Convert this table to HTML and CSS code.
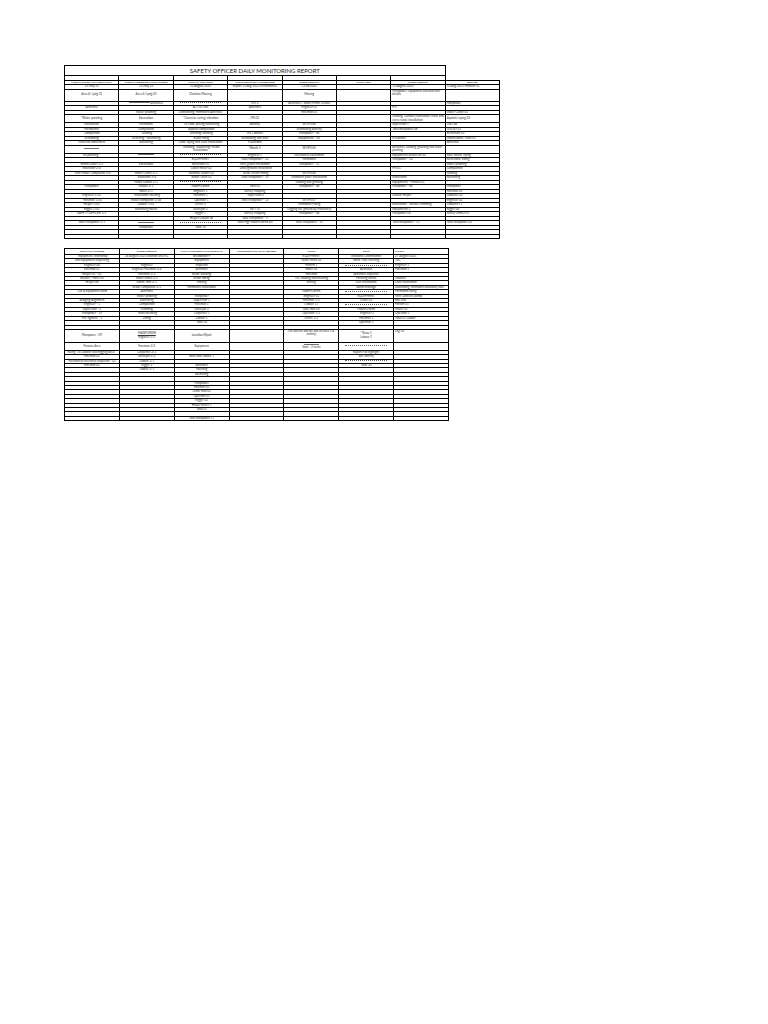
FILE: index.html
```html
<!DOCTYPE html>
<html>
<head>
<meta charset="utf-8">
<title>Safety Officer Daily Monitoring Report</title>
<link rel="stylesheet" href="styles.css">
</head>
<body>
<div class="page">
<table class="sheet t1">
<colgroup><col><col><col><col><col><col><col><col></colgroup>
<tr class="title-row"><td colspan="7" class="title">SAFETY OFFICER DAILY MONITORING REPORT</td><td class="blank"></td></tr>
<tr class="r"><td></td><td></td><td></td><td></td><td></td><td></td><td></td><td class="blank"></td></tr>
<tr class="r hd"><td>PERMIT/WORK AUTHORIZATION</td><td>WORK CARRIED OUT/MONITORED</td><td>ACTIVITY LOCATION</td><td>ACTIVITIES SAFETY SUPERVISED</td><td>WORK PERMITS</td><td>TALKS AREA</td><td>WORK PERMITS</td><td>REMARK</td></tr>
<tr class="r"><td>13 May 23</td><td>13 May 23</td><td>13 August 2023</td><td>Report 13 Aug 2023 Performance</td><td>13.08.2023</td><td></td><td class="l">13 August 2023</td><td class="l">13 Aug 2023 Monitor 01</td></tr>
<tr class="tall12"><td>Area 4/ Lydg 31</td><td>Area 4/ Lydg 03</td><td>IDuction/Moving</td><td></td><td>Moving</td><td></td><td class="l wrap top">Manpower, equipment and activities details</td><td></td></tr>
<tr class="r"><td></td><td><span class="ul"></span> Activities</td><td><span class="dots"></span></td><td>IPS 3</td><td>Activities / Work Permit Details</td><td></td><td></td><td class="l">Manpower</td></tr>
<tr class="r"><td>Activities</td><td></td><td>ACTIVITIES</td><td>Activities</td><td>Engineer 01</td><td></td><td class="l">IPS</td><td></td></tr>
<tr class="r"><td></td><td>Water proofing</td><td>Dismantling, Formwork Activities</td><td></td><td>Foreman 01</td><td></td><td></td><td class="l">Water Cutter 01</td></tr>
<tr class="tall8"><td>"Water proofing</td><td>Excavation</td><td>" Concrete curing/vibration</td><td>IPS 02</td><td></td><td></td><td class="l wrap">Grading, Conduit installation, rebar and curve stone installation</td><td class="l">Asphalt Laying 02</td></tr>
<tr class="r"><td>Excavation</td><td>Formwork</td><td>" Tie cable pulling/backfilling</td><td>Activity</td><td>WI IPS 06</td><td></td><td class="l">Supervisor 1</td><td class="l">Lab Lab</td></tr>
<tr class="r"><td>Formworks</td><td>Compaction</td><td>" Asphalt compaction</td><td></td><td>Scaffolding Activity</td><td></td><td class="l">Total manpower 08</td><td class="l">Leveller 01</td></tr>
<tr class="r"><td>Compaction</td><td>" Grading</td><td>" Grinding/Sanding</td><td>IPS 1 Affairs</td><td>Manpower - 05</td><td></td><td></td><td class="l">Electrician 01</td></tr>
<tr class="r"><td>Scaffolding</td><td>Trenching - Backfilling</td><td>" Rebar fixing</td><td>Scaffolding and Stair</td><td>Equipments - 05</td><td></td><td class="l">IPS Affairs</td><td class="l">Maintenance Truck 01</td></tr>
<tr class="r"><td>Materials movement</td><td>Backfilling</td><td>Cable laying and Duct Installation</td><td>PLANNER</td><td></td><td></td><td></td><td class="l">Activities</td></tr>
<tr class="tall8"><td><span class="ul short"></span></td><td></td><td class="wrap">" Grinding/ Backfilling/ Rebar Installation</td><td>Month 3</td><td>WI IPS 05</td><td></td><td class="l wrap">Activities, sanding, grouting and rebar painting</td><td></td></tr>
<tr class="r"><td>Ex planning -</td><td><span class="ul short"></span></td><td><span class="dots"></span></td><td>Engineer 1</td><td>Mechanical excavation</td><td></td><td class="l">Equipments details for 02</td><td class="l">Base course laying</td></tr>
<tr class="r"><td></td><td></td><td>EQUIPMENT</td><td>Total Manpower - 33</td><td>Formwork</td><td></td><td class="l">Manpower - 10</td><td class="l">Kerb stone fitting</td></tr>
<tr class="r"><td>Wood Cutter 1/2</td><td>Excavation</td><td>Excavator 01</td><td>Wire guard Installation</td><td>Manpower - 11</td><td></td><td></td><td class="l">Water proofing</td></tr>
<tr class="r"><td>Excavator 2/4</td><td></td><td>" Dozer/Roller 02</td><td>" Underground installation</td><td></td><td></td><td class="l">IPS 01</td><td class="l">Compaction</td></tr>
<tr class="r"><td>" Mini Power Compactor 2/4</td><td>Water Cutter 2/1</td><td>" Backhoe Loader 02</td><td>" Kerb/Trench fitting</td><td>WI IPS 06</td><td></td><td></td><td class="l">Grading</td></tr>
<tr class="r"><td></td><td>" Excavator 2/4</td><td>" Water Truck 01</td><td>Total Manpower - 15</td><td>Sandwich panel installation</td><td></td><td class="l">Installation</td><td class="l">Backfilling</td></tr>
<tr class="r"><td></td><td>Power Loader 2/1</td><td><span class="dots"></span></td><td></td><td>Grading and grinding</td><td></td><td class="l">Equipments - Planner 01</td><td></td></tr>
<tr class="r"><td>Manpower</td><td>Grader 2/1</td><td>MANPOWER</td><td>Total 01</td><td>Manpower - 08</td><td></td><td class="l">Manpower - 06</td><td class="l">Manpower</td></tr>
<tr class="r"><td></td><td>Roller 2/1</td><td>Engineer 1</td><td>Survey Mapping</td><td></td><td></td><td></td><td class="l">Foreman 01</td></tr>
<tr class="r"><td>Engineer 1/01</td><td>" Installation Welding</td><td>Foreman 1</td><td>" Supervisor 2</td><td></td><td></td><td class="l">Labour/Helper</td><td class="l">Labourer 02</td></tr>
<tr class="r"><td>" Foreman 1/01</td><td>Water compactor 1/04</td><td>" Operator 1</td><td>Total Manpower - 12</td><td>WI IPS 07</td><td></td><td></td><td class="l">Engineer 01</td></tr>
<tr class="r"><td>Helper 1/01</td><td>Labour 1/01</td><td>Driver 3</td><td></td><td>Formwork Fixing</td><td></td><td class="l">Excavation - Surface trimming</td><td class="l">Labourers 1</td></tr>
<tr class="r"><td>Rigger 1/01</td><td>Backfilling Rocks</td><td>Surveyor 2</td><td>WI TTS</td><td>Digging the ground by Machinery</td><td></td><td class="l">Equipments 3</td><td class="l">Rigger 04</td></tr>
<tr class="r"><td>SAFETY OFFICER 1/1</td><td></td><td>Rigger 1</td><td>Survey Mapping</td><td>Manpower - 06</td><td></td><td class="l">Manpower 03</td><td class="l">Safety Officer 01</td></tr>
<tr class="r"><td></td><td></td><td>" Helper/Labour 06</td><td>Total Manpower - 9</td><td></td><td></td><td></td><td></td></tr>
<tr class="r"><td>Total Manpower 1/1</td><td><span class="ul short"></span></td><td><span class="dots"></span></td><td>Total Mgr MANPOWER 40</td><td>Total Manpower - 21</td><td></td><td class="l">Total manpower - 11</td><td class="l">Total manpower 22</td></tr>
<tr class="r"><td></td><td>Manpower</td><td>Total 10</td><td></td><td></td><td></td><td></td><td></td></tr>
<tr class="r"><td></td><td></td><td></td><td></td><td></td><td></td><td></td><td></td></tr>
<tr class="r"><td></td><td></td><td></td><td></td><td></td><td></td><td></td><td></td></tr>
</table>

<table class="sheet t2">
<colgroup><col><col><col><col><col><col><col></colgroup>
<tr class="r6 hd"><td>TOTAL MANPOWER</td><td>WORK PERMITS</td><td>INITIAL TOOLBOX TALK/MEETING</td><td>HOUSEKEEPING/ DAILY REPORT</td><td>TALKS</td><td>TRA'S</td><td class="l">SAFETY</td></tr>
<tr class="r"><td>" Equipment, Workshop</td><td>24 August 2023 location area 5C</td><td>Breakdown P</td><td></td><td>EQUIPMENT</td><td>Standard/Coordination</td><td class="l">27 August 2023</td></tr>
<tr class="r"><td>and Equipment inspecting</td><td></td><td>Equipment</td><td></td><td>Water truck 02</td><td>Work Time Meeting</td><td class="l">TBC</td></tr>
<tr class="r"><td>Engineer 04</td><td>Engineer</td><td>Inspector</td><td></td><td>Forklift 1</td><td><span class="dots"></span></td><td class="l">Engineer 1</td></tr>
<tr class="r"><td>Foreman 01</td><td>Engineer Foreman 2/4</td><td>Activities</td><td></td><td>Water 01</td><td>Activities</td><td class="l">Foreman 1</td></tr>
<tr class="r"><td>Helper 01 - 01</td><td>Foreman 2/3</td><td>Rebar stacking</td><td></td><td>Foreman</td><td>Activities sequence</td><td></td></tr>
<tr class="r"><td>Welder / Fitter 02</td><td>Water cutter 2/1</td><td>Rebar fitting</td><td></td><td>Tile, floating and finishing</td><td>Finishing works</td><td class="l">Labours</td></tr>
<tr class="r"><td>Helper 08</td><td>Storm Tank 2/1</td><td>Moving</td><td></td><td>drilling</td><td>Den Installation</td><td class="l">Data Installation</td></tr>
<tr class="r"><td></td><td>Rebar Compactor 2/1</td><td>Formwork Installation</td><td></td><td></td><td>Storm drainage</td><td class="l">Scaffolding, formwork/boundary wall</td></tr>
<tr class="r"><td>" Cut &amp; Equipment Boot"</td><td>Activities</td><td></td><td></td><td>MANPOWER</td><td><span class="dots"></span></td><td class="l">Formwork fixing</td></tr>
<tr class="r"><td></td><td>Water proofing</td><td>Manpower</td><td></td><td>Engineer 01</td><td>EQUIPMENT</td><td class="l">Mini Concrete pump</td></tr>
<tr class="r"><td>Bridging Alignment</td><td>Backfilling</td><td>Supervisor 1</td><td></td><td>Foreman 1/1</td><td>Crane 01</td><td class="l">Roll Line</td></tr>
<tr class="r"><td>Engineer - 1</td><td>Compaction</td><td>Foreman 1</td><td></td><td>Labour 11</td><td><span class="dots"></span></td><td class="l">Forklift 01</td></tr>
<tr class="r"><td>Supervisor - 2</td><td>Plumbing</td><td>Surveyor 2</td><td></td><td>Gate man 02</td><td>MANPOWER</td><td class="l">Water 01</td></tr>
<tr class="r"><td>Manpower - 15</td><td>" Rock Breaking</td><td>Carpenter 1</td><td></td><td>Operator 1/2</td><td>" Engineer 2</td><td class="l">Operator 1</td></tr>
<tr class="r"><td>Fire fighters - 1</td><td>Lifting</td><td>Labour 1</td><td></td><td>Driver 1/2</td><td>Foreman 1</td><td class="l">Total 01 Labour</td></tr>
<tr class="r"><td></td><td></td><td>Total 10</td><td></td><td></td><td>Operator 1</td><td></td></tr>
<tr class="r"><td></td><td></td><td></td><td></td><td></td><td></td><td></td></tr>
<tr class="tall13"><td>Manpower - 09</td><td><span class="u">MANPOWER</span><br>Engineer 1/1</td><td>Location/Bjock</td><td></td><td class="top wrap">Lift and tilt and tilt and lift area 5 &amp; activity</td><td>" Raise 1<br>Labour 1</td><td class="l top">Log 10</td></tr>
<tr class="r"><td>Finance Area</td><td>Foreman 2/2</td><td>Equipment</td><td></td><td><span class="ul short"></span><br>Total - 2 items</td><td><span class="dots"></span></td><td></td></tr>
<tr class="r"><td>Rising, Tie Laborer and Rigging Area "</td><td>Carpenter 2/2</td><td></td><td></td><td></td><td>Report risk highlight</td><td></td></tr>
<tr class="r"><td>Foreman 01</td><td>Surveyor 2/2</td><td>Rock tool Loader 1</td><td></td><td></td><td>Site activity</td><td></td></tr>
<tr class="r"><td>Mechanical/Electrical Inspector - 01</td><td>Labour 1/1</td><td></td><td></td><td></td><td><span class="dots"></span></td><td></td></tr>
<tr class="r"><td>Foreman 01</td><td>Rigger 2</td><td>Activities</td><td></td><td></td><td>Total 30</td><td></td></tr>
<tr class="r"><td></td><td>Labour 1/1</td><td>Washing</td><td></td><td></td><td></td><td></td></tr>
<tr class="r"><td></td><td></td><td>Backfilling</td><td></td><td></td><td></td><td></td></tr>
<tr class="r"><td></td><td></td><td></td><td></td><td></td><td></td><td></td></tr>
<tr class="r"><td></td><td></td><td>Manpower</td><td></td><td></td><td></td><td></td></tr>
<tr class="r"><td></td><td></td><td>Foreman 01</td><td></td><td></td><td></td><td></td></tr>
<tr class="r"><td></td><td></td><td>Crane man 01</td><td></td><td></td><td></td><td></td></tr>
<tr class="r"><td></td><td></td><td>Operator 01</td><td></td><td></td><td></td><td></td></tr>
<tr class="r"><td></td><td></td><td>Rigger 01</td><td></td><td></td><td></td><td></td></tr>
<tr class="r"><td></td><td></td><td>Helper driver 1</td><td></td><td></td><td></td><td></td></tr>
<tr class="r"><td></td><td></td><td>Total 07</td><td></td><td></td><td></td><td></td></tr>
<tr class="r"><td></td><td></td><td></td><td></td><td></td><td></td><td></td></tr>
<tr class="r"><td></td><td></td><td>Total manpower 17</td><td></td><td></td><td></td><td></td></tr>
</table>
</div>
</body>
</html>
```
FILE: styles.css
```css
html, body {
  margin: 0;
  padding: 0;
  background: #fff;
}

.page {
  display: flex;
  flex-direction: column;
  align-items: flex-start;
  gap: 9px;
  padding: 65px 0 0 64px;
  font-family: "Lato", "Liberation Sans", sans-serif;
  color: #333;
}

.sheet {
  border-collapse: collapse;
  table-layout: fixed;
}

.t1 { width: 436px; }
.t2 { width: 385px; }

.sheet td {
  border: 1px solid #000;
  padding: 0 1px;
  font-size: 3px;
  line-height: 3.4px;
  text-align: center;
  vertical-align: middle;
  white-space: nowrap;
  overflow: hidden;
}

.sheet td.l { text-align: left; }
.sheet td.top { vertical-align: top; }
.sheet td.wrap { white-space: normal; }

.sheet td.blank {
  border: none;
}

.title-row { height: 10px; }
.sheet td.title {
  font-size: 6px;
  line-height: 8px;
  color: #1a1a1a;
}

.r { height: 4.5px; }
.t2 .r { height: 4.4px; }
.r6 { height: 6px; }
.tall8 { height: 8px; }
.tall12 { height: 12px; }
.tall13 { height: 13px; }

.hd td {
  font-weight: bold;
  color: #2a2a2a;
  font-size: 2.6px;
}

.ul {
  display: inline-block;
  width: 40%;
  border-top: 1px solid #777;
  vertical-align: middle;
}
.ul.short { width: 30%; }

.dots {
  display: inline-block;
  width: 80%;
  border-top: 1px dotted #666;
  vertical-align: middle;
}

.u { text-decoration: underline; }
```
